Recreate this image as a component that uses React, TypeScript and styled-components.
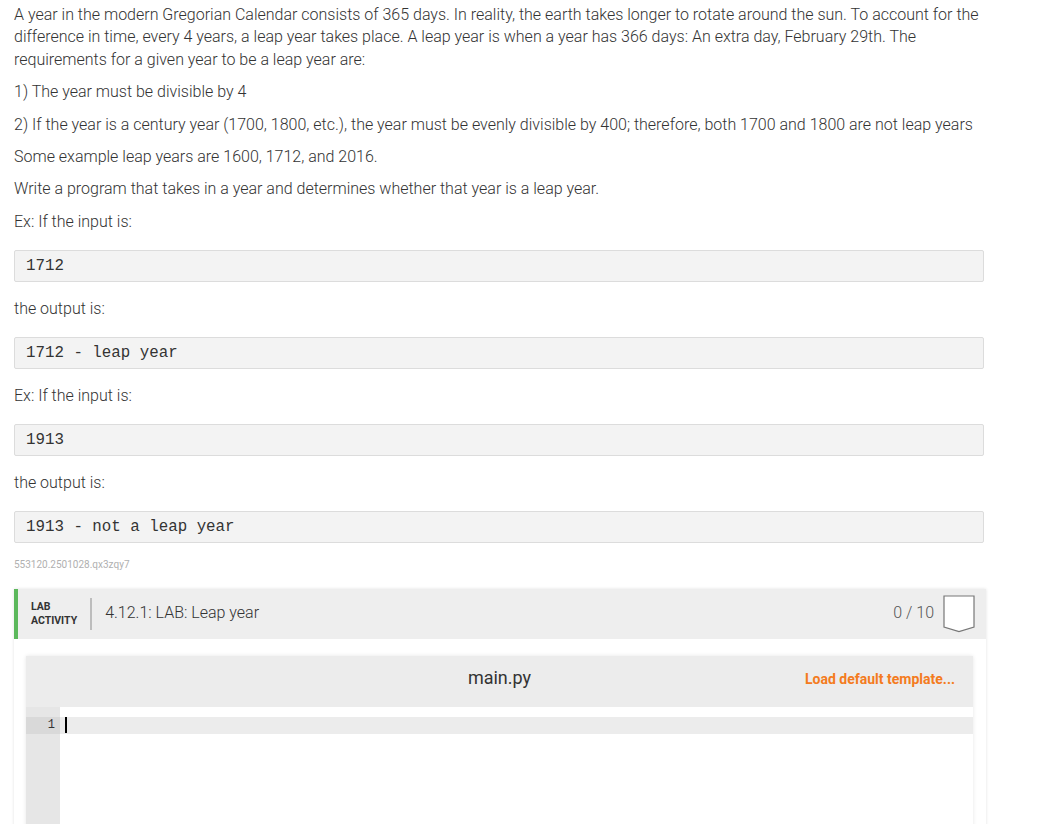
import React from "react";
import styled, { createGlobalStyle } from "styled-components";

const GlobalStyle = createGlobalStyle`
  body {
    margin: 0;
    background: #fff;
    font-family: Roboto, "Liberation Sans", sans-serif;
  }
`;

const Page = styled.div`
  width: 970px;
  padding: 4px 0 0 14px;
  color: #333;
  font-weight: 300;
  font-size: 16px;
  line-height: 1.4;
`;

const Para = styled.p`
  margin: 0 0 10px;
`;

const CodeBox = styled.pre`
  margin: 16.6px 0 16px;
  padding: 0 11px;
  height: 32px;
  box-sizing: border-box;
  display: flex;
  align-items: center;
  background: #f3f3f3;
  border: 1px solid #dcdcdc;
  border-radius: 2px;
  font-family: "Courier New", "Liberation Mono", monospace;
  font-size: 15.8px;
  color: #333;
`;

const Tag = styled.div`
  margin: 6px 0 18px;
  font-size: 10px;
  line-height: 12px;
  color: #b0b0b0;
  font-weight: 400;
`;

const Lab = styled.section`
  width: 972px;
  box-shadow: 0 0 3px rgba(0, 0, 0, 0.12);
  background: #fff;
`;

const LabHeader = styled.header`
  display: flex;
  align-items: center;
  height: 50px;
  background: #eeeeee;
  border-left: 4px solid #5cb85c;
  padding: 0 11px 0 13px;
`;

const LabLabel = styled.div`
  font-size: 10.5px;
  line-height: 14px;
  font-weight: 700;
  color: #333;
  padding-right: 13px;
  border-right: 2px solid #bdbdbd;
  height: 32px;
  display: flex;
  flex-direction: column;
  justify-content: center;
`;

const LabTitle = styled.h2`
  margin: 0 0 0 13px;
  font-size: 16px;
  font-weight: 300;
  color: #333;
  flex: 1;
`;

const Score = styled.span`
  font-size: 16px;
  font-weight: 300;
  color: #555;
  margin-right: 9px;
`;

const LabBody = styled.div`
  padding: 17px 12px 0 12px;
`;

const Editor = styled.div`
  width: 947px;
  background: #fff;
  box-shadow: 0 0 4px rgba(0, 0, 0, 0.1);
`;

const EditorBar = styled.div`
  display: grid;
  grid-template-columns: 1fr auto 1fr;
  align-items: center;
  height: 51px;
  background: #ececec;
  padding: 0 18px;
`;

const FileName = styled.div`
  font-size: 18px;
  font-weight: 400;
  color: #333;
  margin-bottom: 8px;
`;

const LoadLink = styled.a`
  justify-self: end;
  font-size: 14px;
  font-weight: 700;
  color: #f47b20;
  cursor: pointer;
  margin-bottom: 2px;
`;

const CodeArea = styled.div`
  display: grid;
  grid-template-columns: 34px 1fr;
  padding-top: 10px;
  height: 120px;
`;

const Gutter = styled.div`
  background: #e6e6e6;
  margin-top: -10px;
  padding-top: 10px;
`;

const LineNo = styled.div<{ $active?: boolean }>`
  height: 17px;
  line-height: 17px;
  text-align: right;
  padding-right: 5px;
  font-family: "Liberation Mono", monospace;
  font-size: 12px;
  color: #333;
  background: ${({ $active }) => ($active ? "#d9d9d9" : "transparent")};
`;

const Lines = styled.div``;

const Line = styled.div<{ $active?: boolean }>`
  height: 17px;
  padding-left: 5px;
  display: flex;
  align-items: center;
  background: ${({ $active }) => ($active ? "#ececec" : "transparent")};
`;

const Cursor = styled.span`
  width: 2px;
  height: 16px;
  background: #000;
`;

const Badge = () => (
  <svg width="32" height="38" viewBox="0 0 32 38">
    <path d="M1 1 H31 V32 L16 36.5 L1 32 Z" fill="#fff" stroke="#777" strokeWidth="1.2" />
  </svg>
);

const App = () => {
  return (
    <>
      <GlobalStyle />
      <Page>
        <Para>
          A year in the modern Gregorian Calendar consists of 365 days. In reality, the earth takes longer to rotate around the sun. To account for the difference in time, every 4 years, a leap year takes place. A leap year is when a year has 366 days: An extra day, February 29th. The requirements for a given year to be a leap year are:
        </Para>
        <Para>1) The year must be divisible by 4</Para>
        <Para>
          2) If the year is a century year (1700, 1800, etc.), the year must be evenly divisible by 400; therefore, both 1700 and 1800 are not leap years
        </Para>
        <Para>Some example leap years are 1600, 1712, and 2016.</Para>
        <Para>Write a program that takes in a year and determines whether that year is a leap year.</Para>
        <Para>Ex: If the input is:</Para>
        <CodeBox>1712</CodeBox>
        <Para>the output is:</Para>
        <CodeBox>1712 - leap year</CodeBox>
        <Para>Ex: If the input is:</Para>
        <CodeBox>1913</CodeBox>
        <Para>the output is:</Para>
        <CodeBox>1913 - not a leap year</CodeBox>
        <Tag>553120.2501028.qx3zqy7</Tag>
        <Lab>
          <LabHeader>
            <LabLabel>
              <span>LAB</span>
              <span>ACTIVITY</span>
            </LabLabel>
            <LabTitle>4.12.1: LAB: Leap year</LabTitle>
            <Score>0 / 10</Score>
            <Badge />
          </LabHeader>
          <LabBody>
            <Editor>
              <EditorBar>
                <span />
                <FileName>main.py</FileName>
                <LoadLink>Load default template...</LoadLink>
              </EditorBar>
              <CodeArea>
                <Gutter>
                  <LineNo $active>1</LineNo>
                </Gutter>
                <Lines>
                  <Line $active>
                    <Cursor />
                  </Line>
                </Lines>
              </CodeArea>
            </Editor>
          </LabBody>
        </Lab>
      </Page>
    </>
  );
};

export default App;
